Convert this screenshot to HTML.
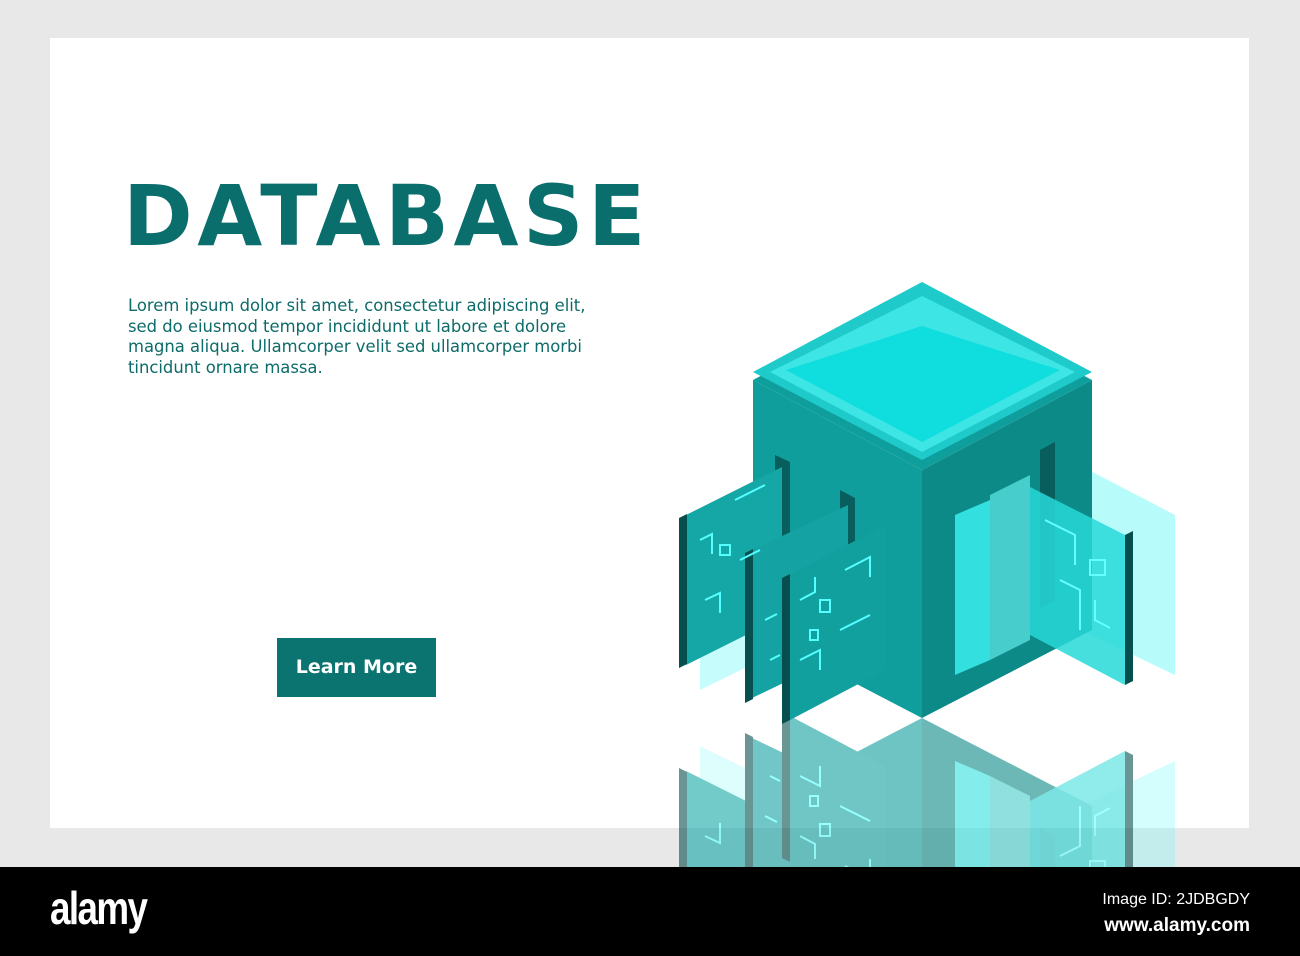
<!DOCTYPE html>
<html><head><meta charset="utf-8"><style>
html,body{margin:0;padding:0}
body{width:1300px;height:956px;background:#e8e8e8;position:relative;overflow:hidden;font-family:"DejaVu Sans","Liberation Sans",sans-serif}
.card{position:absolute;left:50px;top:38px;width:1199px;height:790px;background:#fff}
h1{position:absolute;left:123px;top:168px;margin:0;font-size:84px;font-weight:bold;color:#0a6e6c;letter-spacing:4.5px;line-height:96px}
p{position:absolute;left:128px;top:296px;margin:0;font-size:16.4px;line-height:20.5px;color:#0d6b6a;width:465px}
.btn{position:absolute;left:277px;top:638px;width:159px;height:59px;background:#0b7370;color:#fff;font-weight:bold;font-size:19px;line-height:59px;text-align:center}
.foot{position:absolute;left:0;top:867px;width:1300px;height:89px;background:#000;color:#fff}
.logo{position:absolute;left:50px;top:14px;font-size:46px;font-family:"Liberation Sans Narrow","Liberation Sans",sans-serif;font-weight:bold;letter-spacing:-2px;transform:scaleX(.8);transform-origin:left}
.id{position:absolute;right:50px;top:20px;font-size:16px;text-align:right;line-height:26px;font-family:"Liberation Sans Narrow","Liberation Sans",sans-serif}
.id b{font-size:19px}
svg{position:absolute;left:0;top:0}
</style></head><body>
<div class="card"></div>
<h1>DATABASE</h1>
<p>Lorem ipsum dolor sit amet, consectetur adipiscing elit, sed do eiusmod tempor incididunt ut labore et dolore magna aliqua. Ullamcorper velit sed ullamcorper morbi tincidunt ornare massa.</p>
<div class="btn">Learn More</div>
<svg width="1300" height="867" viewBox="0 0 1300 867">
<defs>
<g id="srv">
 <polygon points="1060,455 1175,515 1175,675 1060,620" fill="#5ff7f7" opacity=".45"/>
 <polygon points="753,380 922,470 922,718 753,630" fill="#0f9e9c"/>
 <polygon points="922,470 1092,380 1092,630 922,718" fill="#0b8a88"/>
 <polygon points="775,455 790,462 790,610 775,602" fill="#075e5c"/>
 <polygon points="840,490 855,498 855,650 840,642" fill="#075e5c"/>
 <polygon points="1040,450 1055,442 1055,600 1040,608" fill="#075e5c"/>
 <polygon points="955,515 990,500 990,660 955,675" fill="#3ff5f5" opacity=".8"/>
 <polygon points="990,495 1030,475 1030,640 990,660" fill="#6ffafa" opacity=".6"/>
 <polygon points="1030,487 1125,535 1125,685 1030,635" fill="#27d8d8" opacity=".85"/>
 <polygon points="1125,535 1133,531 1133,681 1125,685" fill="#064f4e"/>
 <g stroke="#6ff" stroke-width="2" fill="none"><path d="M1045 520 l30 15 v30 M1090 560 h15 v15 h-15z M1060 580 l20 10 v40 M1095 600 v20 l15 8"/></g>
 <polygon points="700,690 745,668 745,520 700,542" fill="#5ff7f7" opacity=".35"/>
 <polygon points="686,515 782,467 782,617 686,665" fill="#15a7a6"/>
 <polygon points="679,518 687,514 687,664 679,668" fill="#064f4e"/>
 <polygon points="752,550 848,505 848,652 752,698" fill="#14a3a2"/>
 <polygon points="745,553 753,549 753,699 745,703" fill="#064f4e"/>
 <polygon points="790,575 885,525 885,670 790,720" fill="#12a09f"/>
 <polygon points="782,578 790,574 790,720 782,724" fill="#064f4e"/>
 <g stroke="#5ff" stroke-width="2" fill="none">
  <path d="M700 540 l12 -6 v20 M720 545 h10 v10 h-10z M735 500 l30 -15 M705 600 l15 -7 v20 M740 560 l20 -10 M800 600 l15 -8 v-15 M820 600 h10 v12 h-10z M845 570 l25 -13 v20 M800 660 l20 -10 v20 M840 630 l30 -15 M810 630 h8 v10 h-8z M765 620 l12 -6 M770 660 l10 -5"/>
 </g>
 <polygon points="753,380 922,470 1092,380 922,290" fill="#0e9e9c"/>
 <polygon points="753,372 922,460 1092,372 922,282" fill="#1fcaca"/>
 <polygon points="770,372 922,452 1075,372 922,296" fill="#40e8e8" opacity=".9"/>
 <polygon points="786,370 922,442 1060,370 922,326" fill="#05dcdc" opacity=".8"/>
</g>
</defs>
<use href="#srv"/>
<g opacity=".6" transform="translate(0,1436) scale(1,-1)"><use href="#srv"/></g>
</svg>
<div class="foot"><div class="logo">alamy</div><div class="id">Image ID: 2JDBGDY<br><b>www.alamy.com</b></div></div>
</body></html>
